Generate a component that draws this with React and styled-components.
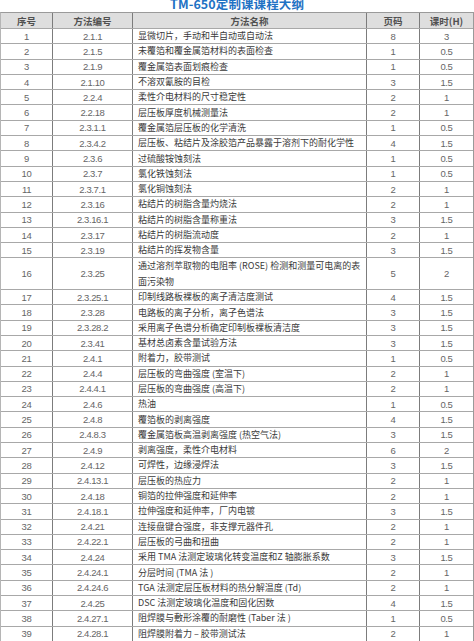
import React from 'react';
import styled, { createGlobalStyle } from 'styled-components';

const GlobalStyle = createGlobalStyle`
  html, body {
    margin: 0;
    padding: 0;
    background: #ffffff;
  }
  body {
    font-family: "Noto Sans CJK SC", "Noto Sans", sans-serif;
    overflow: hidden;
  }
`;

const courses = [
  ['1', '2.1.1', '显微切片，手动和半自动或自动法', '8', '3'],
  ['2', '2.1.5', '未覆箔和覆金属箔材料的表面检查', '1', '0.5'],
  ['3', '2.1.9', '覆金属箔表面划痕检查', '1', '0.5'],
  ['4', '2.1.10', '不溶双氰胺的目检', '3', '1.5'],
  ['5', '2.2.4', '柔性介电材料的尺寸稳定性', '2', '1'],
  ['6', '2.2.18', '层压板厚度机械测量法', '2', '1'],
  ['7', '2.3.1.1', '覆金属箔层压板的化学清洗', '1', '0.5'],
  ['8', '2.3.4.2', '层压板、粘结片及涂胶箔产品暴露于溶剂下的耐化学性', '4', '1.5'],
  ['9', '2.3.6', '过硫酸铵蚀刻法', '1', '0.5'],
  ['10', '2.3.7', '氯化铁蚀刻法', '1', '0.5'],
  ['11', '2.3.7.1', '氯化铜蚀刻法', '2', '1'],
  ['12', '2.3.16', '粘结片的树脂含量灼烧法', '2', '1'],
  ['13', '2.3.16.1', '粘结片的树脂含量称重法', '3', '1.5'],
  ['14', '2.3.17', '粘结片的树脂流动度', '2', '1'],
  ['15', '2.3.19', '粘结片的挥发物含量', '3', '1.5'],
  ['16', '2.3.25', '通过溶剂萃取物的电阻率 (ROSE) 检测和测量可电离的表面污染物', '5', '2', true],
  ['17', '2.3.25.1', '印制线路板裸板的离子清洁度测试', '4', '1.5'],
  ['18', '2.3.28', '电路板的离子分析，离子色谱法', '3', '1.5'],
  ['19', '2.3.28.2', '采用离子色谱分析确定印制板裸板清洁度', '3', '1.5'],
  ['20', '2.3.41', '基材总卤素含量试验方法', '3', '1.5'],
  ['21', '2.4.1', '附着力，胶带测试', '1', '0.5'],
  ['22', '2.4.4', '层压板的弯曲强度 (室温下)', '2', '1'],
  ['23', '2.4.4.1', '层压板的弯曲强度 (高温下)', '2', '1'],
  ['24', '2.4.6', '热油', '1', '0.5'],
  ['25', '2.4.8', '覆箔板的剥离强度', '4', '1.5'],
  ['26', '2.4.8.3', '覆金属箔板高温剥离强度 (热空气法)', '3', '1.5'],
  ['27', '2.4.9', '剥离强度，柔性介电材料', '6', '2'],
  ['28', '2.4.12', '可焊性，边缘浸焊法', '3', '1.5'],
  ['29', '2.4.13.1', '层压板的热应力', '2', '1'],
  ['30', '2.4.18', '铜箔的拉伸强度和延伸率', '2', '1'],
  ['31', '2.4.18.1', '拉伸强度和延伸率，厂内电镀', '3', '1.5'],
  ['32', '2.4.21', '连接盘键合强度，非支撑元器件孔', '2', '1'],
  ['33', '2.4.22.1', '层压板的弓曲和扭曲', '2', '1'],
  ['34', '2.4.24', '采用 TMA 法测定玻璃化转变温度和Z 轴膨胀系数', '3', '1.5'],
  ['35', '2.4.24.1', '分层时间 (TMA 法 )', '2', '1'],
  ['36', '2.4.24.6', 'TGA 法测定层压板材料的热分解温度 (Td)', '2', '1'],
  ['37', '2.4.25', 'DSC 法测定玻璃化温度和固化因数', '4', '1.5'],
  ['38', '2.4.27.1', '阻焊膜与敷形涂覆的耐磨性 (Taber 法 )', '1', '0.5'],
  ['39', '2.4.28.1', '阻焊膜附着力 – 胶带测试法', '2', '1'],
];

const Page = styled.div`
  width: 474px;
  display: flex;
  flex-direction: column;
`;

const Title = styled.h1`
  margin: -2px 0 0;
  height: 14px;
  font-size: 12.5px;
  line-height: 12px;
  font-weight: 700;
  color: #1f72c4;
  text-align: center;
  letter-spacing: 0.1px;
`;

const Table = styled.div`
  display: flex;
  flex-direction: column;
  border-top: 1px solid #9a9a9a;
  border-left: 1px solid #b5b5b5;
  border-right: 1px solid #9a9a9a;
`;

const Row = styled.div`
  display: grid;
  grid-template-columns: 52px 80px 234px 53px 1fr;
  height: ${p => (p.$tall ? '31.6px' : p.$head ? '16px' : '15.3px')};
  box-sizing: border-box;
  border-bottom: 1px solid #a8a8a8;
  background: ${p => (p.$head ? '#dedede' : '#ffffff')};
`;

const Cell = styled.div`
  display: flex;
  align-items: center;
  justify-content: ${p => (p.$left ? 'flex-start' : 'center')};
  padding: ${p => (p.$left ? '0 3px 0 5px' : '0')};
  border-right: ${p => (p.$last ? 'none' : '1px solid #7c7c7c')};
  overflow: hidden;
  white-space: ${p => (p.$wrap ? 'normal' : 'nowrap')};
`;

const HeadText = styled.span`
  font-size: 9.5px;
  font-weight: 700;
  color: #505050;
`;

const NumText = styled.span`
  font-family: "Liberation Sans", Arial, sans-serif;
  font-size: 9.5px;
  color: #666666;
  letter-spacing: -0.4px;
`;

const NameText = styled.span`
  font-size: 9px;
  line-height: 16px;
  color: #3a3a3a;
`;

function CourseRow({ no, code, name, pages, hours, tall }) {
  return (
    <Row $tall={tall}>
      <Cell><NumText>{no}</NumText></Cell>
      <Cell><NumText>{code}</NumText></Cell>
      <Cell $left $wrap={tall}><NameText>{name}</NameText></Cell>
      <Cell><NumText>{pages}</NumText></Cell>
      <Cell $last><NumText>{hours}</NumText></Cell>
    </Row>
  );
}

export default function App() {
  return (
    <Page>
      <GlobalStyle />
      <Title>TM-650定制课课程大纲</Title>
      <Table>
        <Row $head>
          <Cell><HeadText>序号</HeadText></Cell>
          <Cell><HeadText>方法编号</HeadText></Cell>
          <Cell><HeadText>方法名称</HeadText></Cell>
          <Cell><HeadText>页码</HeadText></Cell>
          <Cell $last><HeadText>课时(H)</HeadText></Cell>
        </Row>
        {courses.map(c => (
          <CourseRow
            key={c[0]}
            no={c[0]}
            code={c[1]}
            name={c[2]}
            pages={c[3]}
            hours={c[4]}
            tall={c[5]}
          />
        ))}
      </Table>
    </Page>
  );
}
